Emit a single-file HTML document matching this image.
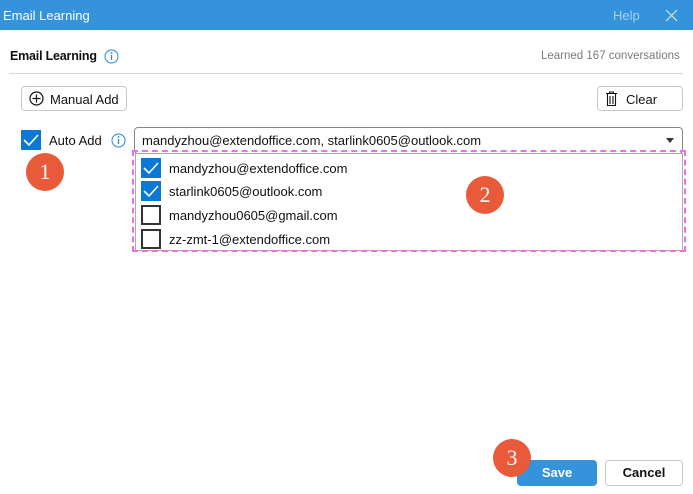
<!DOCTYPE html>
<html><head><style>
*{margin:0;padding:0;box-sizing:border-box}
body{width:693px;height:494px;background:#fff;font-family:"Liberation Sans",sans-serif;position:relative;overflow:hidden;font-size:13px;color:#111}
.a{position:absolute}
.cb{position:absolute;width:20px;height:20px;background:#0a78d4}
.cb svg{position:absolute;left:2px;top:3px}
.ub{position:absolute;width:20px;height:20px;border:2px solid #333;background:#fff}
.circ{position:absolute;width:38px;height:38px;border-radius:50%;background:#e85a3a;color:#fff;font-family:"Liberation Serif",serif;font-size:22px;text-align:center;line-height:38px}
.btn{position:absolute;border:1px solid #c8c8c8;border-radius:4px;background:#fff}
</style></head><body>
<div class="a" style="left:0;top:0;width:693px;height:30px;background:#3593dc"></div>
<div class="a" style="left:3px;top:8px;color:#fff;font-size:13px">Email Learning</div>
<div class="a" style="left:613px;top:8px;color:#a8cff0;font-size:13px">Help</div>
<svg class="a" style="left:665px;top:9px" width="13" height="13"><path d="M1 1L12 12M12 1L1 12" stroke="#cfe4f7" stroke-width="1.2"/></svg>
<div class="a" style="left:10px;top:49px;font-weight:bold;font-size:12.5px;letter-spacing:-0.2px">Email Learning</div>
<svg class="a" style="left:104px;top:49px" width="15" height="15"><circle cx="7.5" cy="7.5" r="6.5" fill="none" stroke="#2a86d8" stroke-width="1"/><path d="M7.5 6v5" stroke="#2a86d8" stroke-width="1.3"/><circle cx="7.5" cy="4" r="0.9" fill="#2a86d8"/></svg>
<div class="a" style="left:541px;top:50px;color:#7a7a7a;font-size:11.5px">Learned 167 conversations</div>
<div class="a" style="left:9px;top:73px;width:674px;height:1px;background:#d6d6d6"></div>
<div class="btn" style="left:21px;top:86px;width:106px;height:25px"></div>
<svg class="a" style="left:29px;top:91px" width="15" height="15"><circle cx="7.5" cy="7.5" r="6.5" fill="none" stroke="#111" stroke-width="1.2"/><path d="M7.5 3.5v8M3.5 7.5h8" stroke="#111" stroke-width="1.2"/></svg>
<div class="a" style="left:50px;top:92px">Manual Add</div>
<div class="btn" style="left:597px;top:86px;width:86px;height:25px"></div>
<svg class="a" style="left:605px;top:91px" width="13" height="16"><path d="M1 2.5h11M4.5 2.5V1h4v1.5M2.5 3v11.5h8V3M5 5v8M8 5v8" fill="none" stroke="#111" stroke-width="1.1"/></svg>
<div class="a" style="left:626px;top:92px">Clear</div>
<div class="cb" style="left:21px;top:130px"><svg width="16" height="14"><path d="M1 7l5 5L15 2" fill="none" stroke="#fff" stroke-width="1.6"/></svg></div>
<div class="a" style="left:49px;top:133px">Auto Add</div>
<svg class="a" style="left:111px;top:133px" width="15" height="15"><circle cx="7.5" cy="7.5" r="6.5" fill="none" stroke="#2a86d8" stroke-width="1"/><path d="M7.5 6v5" stroke="#2a86d8" stroke-width="1.3"/><circle cx="7.5" cy="4" r="0.9" fill="#2a86d8"/></svg>
<div class="a" style="left:134px;top:127px;width:549px;height:27px;border:1px solid #888;border-radius:4px"></div>
<div class="a" style="left:142px;top:133px">mandyzhou@extendoffice.com, starlink0605@outlook.com</div>
<div class="a" style="left:666px;top:138px;width:0;height:0;border-left:4px solid transparent;border-right:4px solid transparent;border-top:5px solid #333"></div>
<div class="a" style="left:135px;top:153px;width:548px;height:98px;background:#fff;border:1px solid #aaa"></div>
<div class="a" style="left:132px;top:150px;width:554px;height:102px;border:2px dashed #ee6ee6"></div>
<div class="cb" style="left:141px;top:158px"><svg width="16" height="14"><path d="M1 7l5 5L15 2" fill="none" stroke="#fff" stroke-width="1.6"/></svg></div>
<div class="a" style="left:169px;top:161px">mandyzhou@extendoffice.com</div>
<div class="cb" style="left:141px;top:181px"><svg width="16" height="14"><path d="M1 7l5 5L15 2" fill="none" stroke="#fff" stroke-width="1.6"/></svg></div>
<div class="a" style="left:169px;top:184px">starlink0605@outlook.com</div>
<div class="ub" style="left:141px;top:205px"></div>
<div class="a" style="left:169px;top:208px">mandyzhou0605@gmail.com</div>
<div class="ub" style="left:141px;top:229px"></div>
<div class="a" style="left:169px;top:232px">zz-zmt-1@extendoffice.com</div>
<div class="circ" style="left:26px;top:153px">1</div>
<div class="circ" style="left:466px;top:176px">2</div>
<div class="a" style="left:517px;top:460px;width:80px;height:26px;background:#3593dc;border-radius:4px;color:#fff;font-weight:bold;text-align:center;line-height:26px">Save</div>
<div class="btn" style="left:605px;top:460px;width:78px;height:26px;text-align:center;line-height:24px;font-weight:bold">Cancel</div>
<div class="circ" style="left:493px;top:439px">3</div>
</body></html>
